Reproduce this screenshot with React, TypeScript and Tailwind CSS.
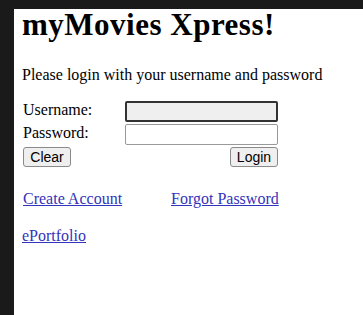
export default function App() {
  return (
    <div className="h-[315px] w-[363px] overflow-hidden bg-[#1a1a1a] pl-[14px] pt-[9px]">
      <div className="h-full bg-white pl-[8px] text-black [font-family:'Liberation_Serif',serif]">
        <h1 className="mt-[0px] text-[31px] font-bold leading-[31px] tracking-[0.5px]">myMovies Xpress!</h1>

        <p className="mt-[26px] text-[16px] leading-[18px]">
          Please login with your username and password
        </p>

        {/* Login form */}
        <form className="mt-[17px] w-[256px] pl-[1px] text-[16px]">
          <div className="grid grid-cols-[102px_1fr] items-start gap-y-[2px]">
            <label className="leading-[18px]">Username:</label>
            <input
              type="text"
              className="h-[21px] w-[153px] rounded-[2px] border-2 border-[#333] bg-[#efefef] px-1 outline-none"
            />
            <label className="leading-[18px]">Password:</label>
            <input
              type="password"
              className="h-[21px] w-[153px] rounded-[2px] border border-[#999] bg-white px-1 outline-none"
            />
          </div>
          <div className="mt-[2px] flex items-center justify-between">
            <button
              type="button"
              className="h-[20px] w-[48px] rounded-[3px] border border-[#8a8a8a] bg-[#efefef] text-[14px] leading-none [font-family:'Liberation_Sans',sans-serif]"
            >
              Clear
            </button>
            <button
              type="button"
              className="h-[20px] w-[48px] rounded-[3px] border border-[#8a8a8a] bg-[#efefef] text-[14px] leading-none [font-family:'Liberation_Sans',sans-serif]"
            >
              Login
            </button>
          </div>
        </form>

        {/* Links */}
        <div className="mt-[23px] grid w-[290px] grid-cols-[148px_1fr] pl-[1px] text-[16px] leading-[18px]">
          <a href="#" className="justify-self-start whitespace-nowrap text-[#3333bb] underline">
            Create Account
          </a>
          <a href="#" className="justify-self-start whitespace-nowrap text-[#3333bb] underline">
            Forgot Password
          </a>
        </div>
        <div className="mt-[19px] text-[16px] leading-[18px]">
          <a href="#" className="text-[#3333bb] underline">
            ePortfolio
          </a>
        </div>
      </div>
    </div>
  );
}
